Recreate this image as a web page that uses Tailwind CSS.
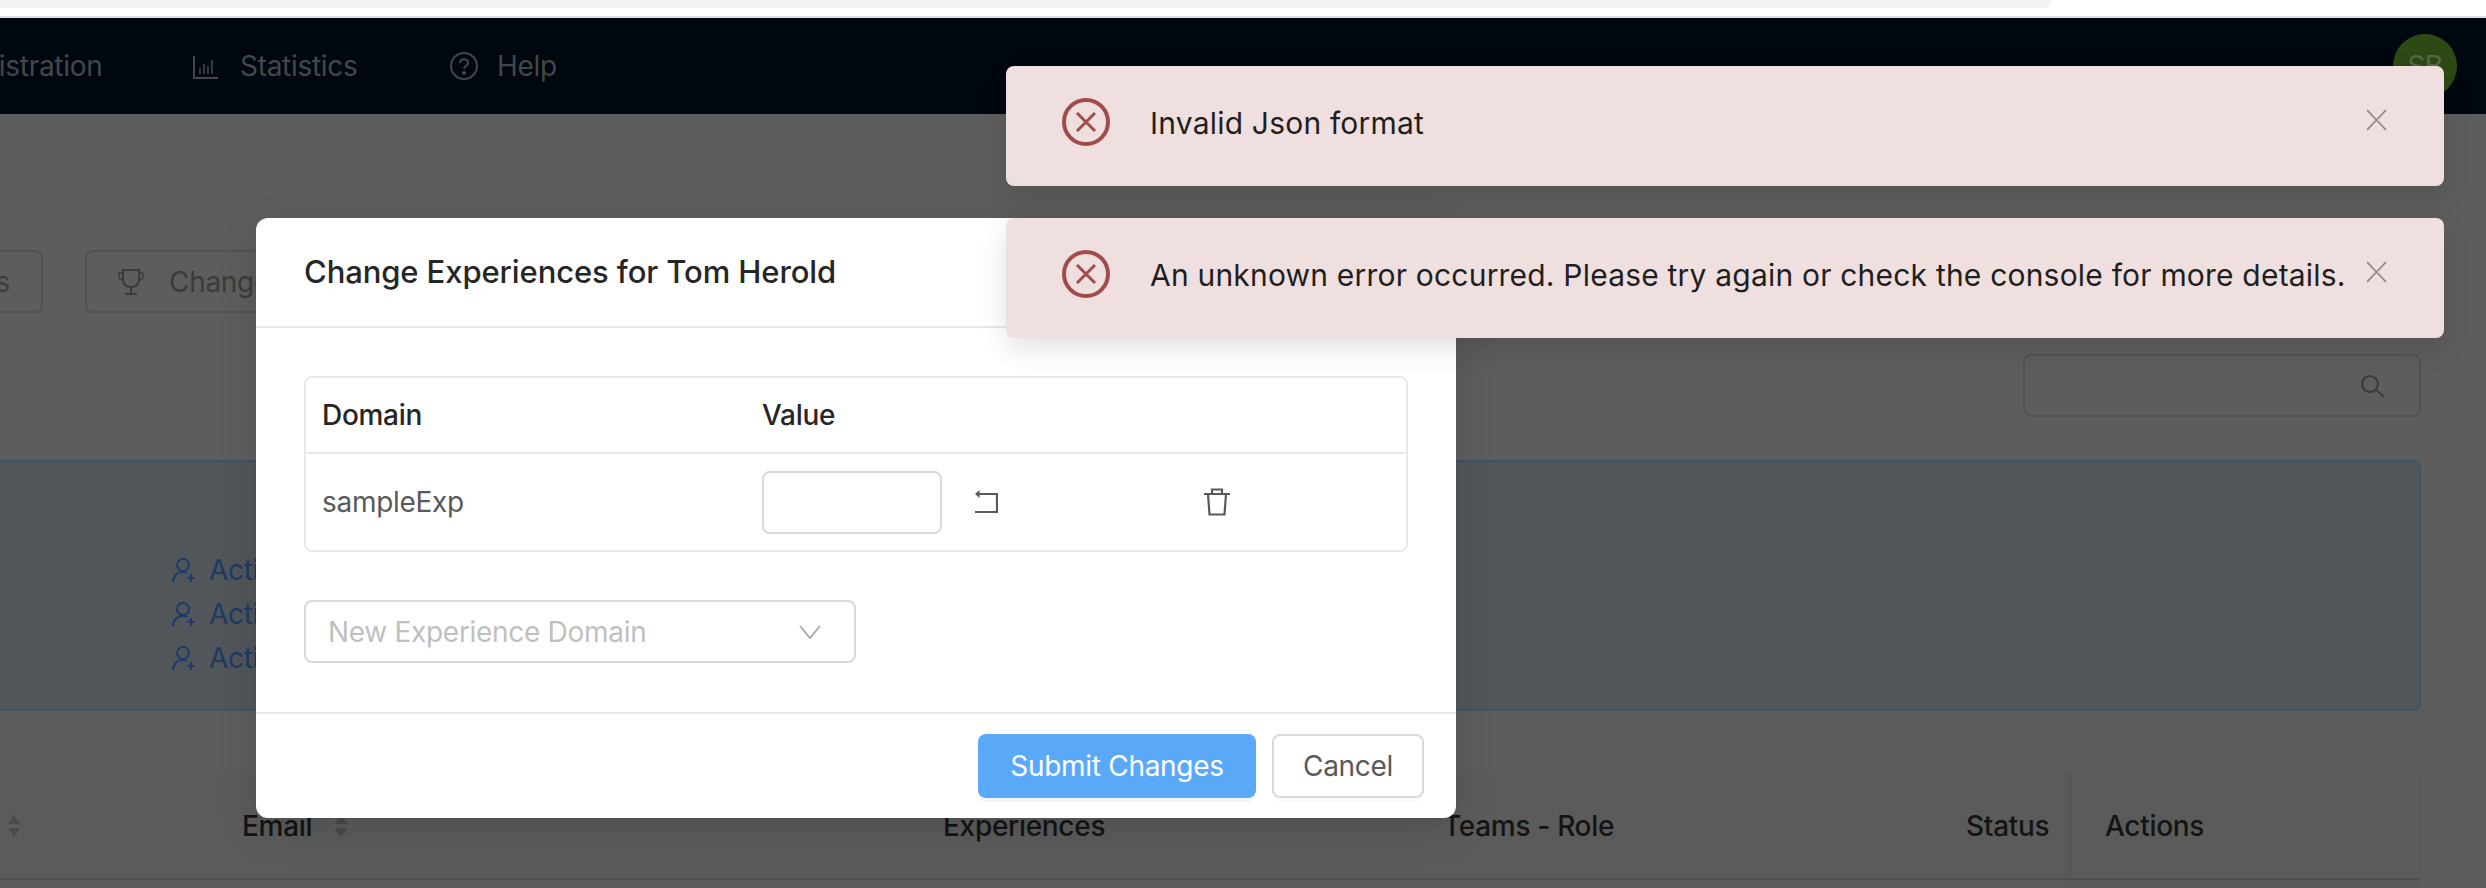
<!DOCTYPE html>
<html lang="en">
<head>
  <meta charset="UTF-8" />
  <title>Change Experiences</title>
  <script src="https://cdn.jsdelivr.net/npm/@tailwindcss/browser@4"></script>
</head>
<body class="bg-[#5d5d5d] font-['Inter','Liberation_Sans',sans-serif] text-[28px] tracking-[-0.3px] overflow-hidden">
  <div class="relative w-[2486px] h-[888px] overflow-hidden">

    <!-- browser strip -->
    <div class="h-[18px] bg-white border-b-2 border-[#dfe1e4]">
      <div class="h-2 w-[2051px] bg-[#f1f2f4] rounded-br-xl"></div>
    </div>

    <!-- nav -->
    <nav class="h-24 bg-[#00070f] flex items-center text-[#43474b]">
      <span class="ml-[-84px] w-[277px] shrink-0">Administration</span>
      <svg class="w-[26px] h-[24px] mt-1" viewBox="0 0 26 24" fill="none" stroke="currentColor" stroke-width="2"><path d="M1 0v22h24"/><path d="M7 18v-6M11 18V8M15 18v-8M19 18V4" stroke-width="1.6"/></svg>
      <span class="ml-[21px] w-[210px]">Statistics</span>
      <svg class="w-[28px] h-[28px]" viewBox="0 0 28 28" fill="none" stroke="currentColor" stroke-width="2"><circle cx="14" cy="14" r="13"/><path d="M10 11c0-5 8-5 8 0 0 3-4 3-4 6"/><circle cx="14" cy="21" r="1" fill="currentColor"/></svg>
      <span class="ml-[19px]">Help</span>
      <div class="ml-auto mr-[29px] w-16 h-16 rounded-full bg-[#2d4a14] flex items-center justify-center text-[#56684a]">SB</div>
    </nav>

    <!-- page behind the dialog -->
    <div class="mt-[136px] flex gap-[42px] -ml-[100px] h-[63px]">
      <div class="w-[143px] border-2 border-[#525252] rounded-lg flex items-center justify-end pr-[31px] text-[#3b3b3b]">ts</div>
      <div class="w-[500px] border-2 border-[#525252] rounded-lg flex items-center pl-[30px] gap-[24px] text-[#3b3b3b]">
        <svg class="w-[28px] h-[28px]" viewBox="0 0 28 28" fill="none" stroke="currentColor" stroke-width="2"><path d="M6 2h16v9c0 5-3 8-8 8s-8-3-8-8zM14 19v6M8 26h12"/><path d="M6 5H2v3c0 3 2 4 4 4M22 5h4v3c0 3-2 4-4 4" stroke-width="1.4"/></svg>
        <span>Change Experiences</span>
      </div>
    </div>
    <div class="mt-[41px] flex justify-end pr-[65px]">
      <div class="w-[398px] h-[63px] border-2 border-[#525252] rounded-lg flex items-center justify-end pr-[33px] text-[#3b3b3b]">
        <svg class="w-[26px] h-[24px]" viewBox="0 0 26 24" fill="none" stroke="currentColor" stroke-width="2.2"><circle cx="10" cy="10" r="8"/><path d="M16 16l8 7"/></svg>
      </div>
    </div>
    <div class="mt-[43px] -ml-5 w-[2441px] h-[251px] bg-[#50565a] border-2 border-[#3c5468] rounded-lg pt-[86px] pl-[190px] text-[#1f3a66]">
      <div class="flex flex-col">
        <div class="h-[44px] flex items-center gap-[13px]">
          <svg class="w-[24px] h-[24px]" viewBox="0 0 24 24" fill="none" stroke="currentColor" stroke-width="2"><circle cx="11" cy="7" r="6"/><path d="M1 24c0-6 4-10 10-10 2 0 3 .4 4 1M19 16v8M15.500 20h7"/></svg>
          <span>Activate</span>
        </div>
        <div class="h-[44px] flex items-center gap-[13px]">
          <svg class="w-[24px] h-[24px]" viewBox="0 0 24 24" fill="none" stroke="currentColor" stroke-width="2"><circle cx="11" cy="7" r="6"/><path d="M1 24c0-6 4-10 10-10 2 0 3 .4 4 1M19 16v8M15.500 20h7"/></svg>
          <span>Activate</span>
        </div>
        <div class="h-[44px] flex items-center gap-[13px]">
          <svg class="w-[24px] h-[24px]" viewBox="0 0 24 24" fill="none" stroke="currentColor" stroke-width="2"><circle cx="11" cy="7" r="6"/><path d="M1 24c0-6 4-10 10-10 2 0 3 .4 4 1M19 16v8M15.500 20h7"/></svg>
          <span>Activate</span>
        </div>
      </div>
    </div>

    <!-- users table -->
    <div class="mt-[61px] w-[2421px] h-[116px] bg-[#5b5b5b] text-[#141414] font-medium">
      <div class="h-[108px] border-b-2 border-[#505050] flex items-center pt-[2px]">
        <div class="w-[242px] pl-2 shrink-0">
          <div class="flex flex-col gap-1 text-[#4a4a4a]">
            <div class="w-0 h-0 border-x-[6px] border-x-transparent border-b-[9px] border-b-current"></div>
            <div class="w-0 h-0 border-x-[6px] border-x-transparent border-t-[9px] border-t-current"></div>
          </div>
        </div>
        <div class="w-[701px] shrink-0 flex items-center gap-[22px]">
          <span>Email</span>
          <div class="flex flex-col gap-1 text-[#4a4a4a]">
            <div class="w-0 h-0 border-x-[7px] border-x-transparent border-b-[9px] border-b-current"></div>
            <div class="w-0 h-0 border-x-[7px] border-x-transparent border-t-[9px] border-t-current"></div>
          </div>
        </div>
        <div class="w-[500px] shrink-0">Experiences</div>
        <div class="w-[523px] shrink-0">Teams - Role</div>
        <div class="w-[106px] shrink-0">Status</div>
        <div class="w-[349px] shrink-0 h-[106px] pl-[33px] flex items-center shadow-[-4px_0_6px_rgba(0,0,0,0.05)]">Actions</div>
      </div>
    </div>

    <!-- dialog -->
    <div class="absolute left-[256px] top-[218px] w-[1200px] h-[600px] bg-white rounded-xl flex flex-col shadow-[0_12px_40px_rgba(0,0,0,0.12)]">
      <div class="h-[110px] border-b-2 border-[#e8e8e8] pl-[48px] flex items-center text-[31px] tracking-[-0.1px] font-medium text-[#262626]">Change Experiences for Tom Herold</div>
      <div class="flex-1 px-[48px] pt-[48px]">
        <div class="w-[1104px] border-2 border-[#e8e8e8] rounded-lg">
          <div class="h-[76px] border-b-2 border-[#e8e8e8] flex items-center font-medium text-[#262626]">
            <div class="w-[456px] pl-4">Domain</div>
            <div>Value</div>
          </div>
          <div class="h-[96px] flex items-center text-[#595959]">
            <div class="w-[456px] pl-4">sampleExp</div>
            <div class="w-[180px] h-[63px] border-2 border-[#d9d9d9] rounded-lg"></div>
            <svg class="ml-[32px] w-[24px] h-[24px]" viewBox="0 0 24 24" fill="none" stroke="currentColor" stroke-width="2.200"><path d="M2 4h21v18H1"/><path d="M5.500 0v8L1 4z" fill="currentColor" stroke="none"/></svg>
            <svg class="ml-[206px] w-[26px] h-[28px]" viewBox="0 0 26 28" fill="none" stroke="currentColor" stroke-width="2.200"><path d="M0 6h26M8 6V1.500h10V6M4 6l1.500 20.500h15L22 6"/></svg>
          </div>
        </div>
        <div class="mt-[48px] w-[552px] h-[63px] border-2 border-[#d9d9d9] rounded-lg flex items-center justify-between pl-[22px] pr-[33px] text-[#bfbfbf]">
          <span>New Experience Domain</span>
          <svg class="w-[22px] h-[14px]" viewBox="0 0 22 14" fill="none" stroke="#a6a6a6" stroke-width="1.800"><path d="M1 1l10 12L21 1"/></svg>
        </div>
      </div>
      <div class="h-[106px] border-t-2 border-[#e8e8e8] flex justify-end gap-4 pr-8 pt-5">
        <button class="w-[278px] h-[64px] bg-[#5aa9f8] rounded-lg text-white shadow-[0_4px_0_rgba(0,0,0,0.04)]">Submit Changes</button>
        <button class="w-[152px] h-[64px] border-2 border-[#d9d9d9] rounded-lg text-[#595959] shadow-[0_4px_0_rgba(0,0,0,0.02)]">Cancel</button>
      </div>
    </div>

    <!-- toasts -->
    <div class="absolute left-[1006px] top-[66px] w-[1438px] flex flex-col gap-8 text-[30px] tracking-[0.2px] text-[#1f1f1f]">
      <div class="h-[120px] bg-[#efdfdf] rounded-lg flex items-start pl-[56px] pr-[57px] shadow-[0_10px_28px_rgba(0,0,0,0.12)]">
        <svg class="w-12 h-12 mt-8 shrink-0" viewBox="0 0 48 48" fill="none" stroke="#a24b4b" stroke-width="4"><circle cx="24" cy="24" r="22"/><path d="M15 15l18 18M33 15L15 33" stroke-width="3"/></svg>
        <span class="ml-10 flex-1 mt-10 leading-[34px]">Invalid Json format</span>
        <svg class="w-[21px] h-[22px] mt-[43px] shrink-0" viewBox="0 0 21 22" fill="none" stroke="#8c8686" stroke-width="1.800"><path d="M1 1l19 20M20 1L1 21"/></svg>
      </div>
      <div class="h-[120px] bg-[#efdfdf] rounded-lg flex items-start pl-[56px] pr-[57px] shadow-[0_10px_28px_rgba(0,0,0,0.12)]">
        <svg class="w-12 h-12 mt-8 shrink-0" viewBox="0 0 48 48" fill="none" stroke="#a24b4b" stroke-width="4"><circle cx="24" cy="24" r="22"/><path d="M15 15l18 18M33 15L15 33" stroke-width="3"/></svg>
        <span class="ml-10 flex-1 mt-10 leading-[34px] whitespace-nowrap">An unknown error occurred. Please try again or check the console for more details.</span>
        <svg class="w-[21px] h-[22px] mt-[43px] shrink-0" viewBox="0 0 21 22" fill="none" stroke="#8c8686" stroke-width="1.800"><path d="M1 1l19 20M20 1L1 21"/></svg>
      </div>
    </div>
  </div>
</body>
</html>
